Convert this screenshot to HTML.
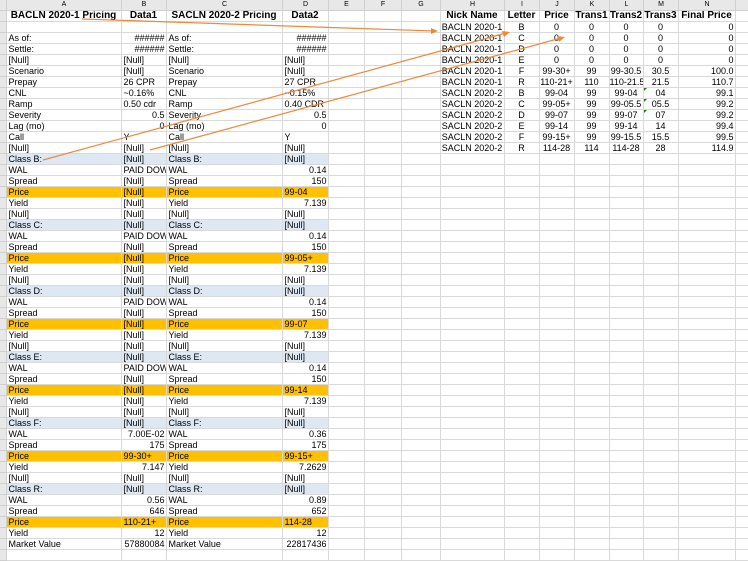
<!DOCTYPE html>
<html><head><meta charset="utf-8"><style>
body{margin:0;width:748px;height:559px;overflow:hidden;background:#fff;font-family:"Liberation Sans",Arial,sans-serif;position:relative}
table{border-collapse:collapse;table-layout:fixed;width:748px;position:absolute;left:0;top:0}
td{height:10px;padding:0 1px 0 2px;border-right:1px solid #d9d9d9;border-bottom:1px solid #d9d9d9;font-size:9px;line-height:10px;white-space:nowrap;overflow:hidden;color:#000}
tr.h td{background:#e8e8e8;font-size:7px;text-align:center;height:10px;border-color:#cfcfcf}
.n{text-align:right}.c{text-align:center;padding:0}
.t td{font-weight:bold;text-align:center;font-size:10px;padding:0}
.b td.x{background:#dde8f3}
.o td.x{background:#ffc000}
td.r{background:#e8e8e8;border-color:#cfcfcf}
.g{position:relative}
.g:before{content:"";position:absolute;left:0;top:0;border-top:3px solid #187a18;border-right:3px solid transparent}
</style></head><body>
<table>
<colgroup><col style="width:6px"><col style="width:115px"><col style="width:45px"><col style="width:116px"><col style="width:46px"><col style="width:36px"><col style="width:37px"><col style="width:39px"><col style="width:64px"><col style="width:35px"><col style="width:35px"><col style="width:35px"><col style="width:34px"><col style="width:35px"><col style="width:57px"><col style="width:13px"></colgroup>
<tr class="h"><td class="r"></td><td>A</td><td>B</td><td>C</td><td>D</td><td>E</td><td>F</td><td>G</td><td>H</td><td>I</td><td>J</td><td>K</td><td>L</td><td>M</td><td>N</td><td></td></tr>
<tr class="t"><td class="r"></td><td>BACLN 2020-1 Pricing</td><td>Data1</td><td>SACLN 2020-2 Pricing</td><td>Data2</td><td></td><td></td><td></td><td>Nick Name</td><td>Letter</td><td>Price</td><td>Trans1</td><td>Trans2</td><td>Trans3</td><td>Final Price</td><td></td></tr>
<tr><td class="r"></td><td></td><td></td><td></td><td></td><td></td><td></td><td></td><td class="c">BACLN 2020-1</td><td class="c">B</td><td class="c">0</td><td class="c">0</td><td class="c">0</td><td class="c">0</td><td class="n">0</td><td></td></tr>
<tr><td class="r"></td><td>As of:</td><td class="n">######</td><td>As of:</td><td class="n">######</td><td></td><td></td><td></td><td class="c">BACLN 2020-1</td><td class="c">C</td><td class="c">0</td><td class="c">0</td><td class="c">0</td><td class="c">0</td><td class="n">0</td><td></td></tr>
<tr><td class="r"></td><td>Settle:</td><td class="n">######</td><td>Settle:</td><td class="n">######</td><td></td><td></td><td></td><td class="c">BACLN 2020-1</td><td class="c">D</td><td class="c">0</td><td class="c">0</td><td class="c">0</td><td class="c">0</td><td class="n">0</td><td></td></tr>
<tr><td class="r"></td><td>[Null]</td><td>[Null]</td><td>[Null]</td><td>[Null]</td><td></td><td></td><td></td><td class="c">BACLN 2020-1</td><td class="c">E</td><td class="c">0</td><td class="c">0</td><td class="c">0</td><td class="c">0</td><td class="n">0</td><td></td></tr>
<tr><td class="r"></td><td>Scenario</td><td>[Null]</td><td>Scenario</td><td>[Null]</td><td></td><td></td><td></td><td class="c">BACLN 2020-1</td><td class="c">F</td><td class="c">99-30+</td><td class="c">99</td><td class="c">99-30.5</td><td class="c">30.5</td><td class="n">100.0</td><td></td></tr>
<tr><td class="r"></td><td>Prepay</td><td>26 CPR</td><td>Prepay</td><td>27 CPR</td><td></td><td></td><td></td><td class="c">BACLN 2020-1</td><td class="c">R</td><td class="c">110-21+</td><td class="c">110</td><td class="c">110-21.5</td><td class="c">21.5</td><td class="n">110.7</td><td></td></tr>
<tr><td class="r"></td><td>CNL</td><td>~0.16%</td><td>CNL</td><td>~0.15%</td><td></td><td></td><td></td><td class="c">SACLN 2020-2</td><td class="c">B</td><td class="c">99-04</td><td class="c">99</td><td class="c">99-04</td><td class="c g">04</td><td class="n">99.1</td><td></td></tr>
<tr><td class="r"></td><td>Ramp</td><td>0.50 cdr</td><td>Ramp</td><td>0.40 CDR</td><td></td><td></td><td></td><td class="c">SACLN 2020-2</td><td class="c">C</td><td class="c">99-05+</td><td class="c">99</td><td class="c">99-05.5</td><td class="c g">05.5</td><td class="n">99.2</td><td></td></tr>
<tr><td class="r"></td><td>Severity</td><td class="n">0.5</td><td>Severity</td><td class="n">0.5</td><td></td><td></td><td></td><td class="c">SACLN 2020-2</td><td class="c">D</td><td class="c">99-07</td><td class="c">99</td><td class="c">99-07</td><td class="c g">07</td><td class="n">99.2</td><td></td></tr>
<tr><td class="r"></td><td>Lag (mo)</td><td class="n">0</td><td>Lag (mo)</td><td class="n">0</td><td></td><td></td><td></td><td class="c">SACLN 2020-2</td><td class="c">E</td><td class="c">99-14</td><td class="c">99</td><td class="c">99-14</td><td class="c">14</td><td class="n">99.4</td><td></td></tr>
<tr><td class="r"></td><td>Call</td><td>Y</td><td>Call</td><td>Y</td><td></td><td></td><td></td><td class="c">SACLN 2020-2</td><td class="c">F</td><td class="c">99-15+</td><td class="c">99</td><td class="c">99-15.5</td><td class="c">15.5</td><td class="n">99.5</td><td></td></tr>
<tr><td class="r"></td><td>[Null]</td><td>[Null]</td><td>[Null]</td><td>[Null]</td><td></td><td></td><td></td><td class="c">SACLN 2020-2</td><td class="c">R</td><td class="c">114-28</td><td class="c">114</td><td class="c">114-28</td><td class="c">28</td><td class="n">114.9</td><td></td></tr>
<tr class="b"><td class="r"></td><td class="x">Class B:</td><td class="x">[Null]</td><td class="x">Class B:</td><td class="x">[Null]</td><td></td><td></td><td></td><td></td><td></td><td></td><td></td><td></td><td></td><td></td><td></td></tr>
<tr><td class="r"></td><td>WAL</td><td>PAID DOWN</td><td>WAL</td><td class="n">0.14</td><td></td><td></td><td></td><td></td><td></td><td></td><td></td><td></td><td></td><td></td><td></td></tr>
<tr><td class="r"></td><td>Spread</td><td>[Null]</td><td>Spread</td><td class="n">150</td><td></td><td></td><td></td><td></td><td></td><td></td><td></td><td></td><td></td><td></td><td></td></tr>
<tr class="o"><td class="r"></td><td class="x">Price</td><td class="x">[Null]</td><td class="x">Price</td><td class="x">99-04</td><td></td><td></td><td></td><td></td><td></td><td></td><td></td><td></td><td></td><td></td><td></td></tr>
<tr><td class="r"></td><td>Yield</td><td>[Null]</td><td>Yield</td><td class="n">7.139</td><td></td><td></td><td></td><td></td><td></td><td></td><td></td><td></td><td></td><td></td><td></td></tr>
<tr><td class="r"></td><td>[Null]</td><td>[Null]</td><td>[Null]</td><td>[Null]</td><td></td><td></td><td></td><td></td><td></td><td></td><td></td><td></td><td></td><td></td><td></td></tr>
<tr class="b"><td class="r"></td><td class="x">Class C:</td><td class="x">[Null]</td><td class="x">Class C:</td><td class="x">[Null]</td><td></td><td></td><td></td><td></td><td></td><td></td><td></td><td></td><td></td><td></td><td></td></tr>
<tr><td class="r"></td><td>WAL</td><td>PAID DOWN</td><td>WAL</td><td class="n">0.14</td><td></td><td></td><td></td><td></td><td></td><td></td><td></td><td></td><td></td><td></td><td></td></tr>
<tr><td class="r"></td><td>Spread</td><td>[Null]</td><td>Spread</td><td class="n">150</td><td></td><td></td><td></td><td></td><td></td><td></td><td></td><td></td><td></td><td></td><td></td></tr>
<tr class="o"><td class="r"></td><td class="x">Price</td><td class="x">[Null]</td><td class="x">Price</td><td class="x">99-05+</td><td></td><td></td><td></td><td></td><td></td><td></td><td></td><td></td><td></td><td></td><td></td></tr>
<tr><td class="r"></td><td>Yield</td><td>[Null]</td><td>Yield</td><td class="n">7.139</td><td></td><td></td><td></td><td></td><td></td><td></td><td></td><td></td><td></td><td></td><td></td></tr>
<tr><td class="r"></td><td>[Null]</td><td>[Null]</td><td>[Null]</td><td>[Null]</td><td></td><td></td><td></td><td></td><td></td><td></td><td></td><td></td><td></td><td></td><td></td></tr>
<tr class="b"><td class="r"></td><td class="x">Class D:</td><td class="x">[Null]</td><td class="x">Class D:</td><td class="x">[Null]</td><td></td><td></td><td></td><td></td><td></td><td></td><td></td><td></td><td></td><td></td><td></td></tr>
<tr><td class="r"></td><td>WAL</td><td>PAID DOWN</td><td>WAL</td><td class="n">0.14</td><td></td><td></td><td></td><td></td><td></td><td></td><td></td><td></td><td></td><td></td><td></td></tr>
<tr><td class="r"></td><td>Spread</td><td>[Null]</td><td>Spread</td><td class="n">150</td><td></td><td></td><td></td><td></td><td></td><td></td><td></td><td></td><td></td><td></td><td></td></tr>
<tr class="o"><td class="r"></td><td class="x">Price</td><td class="x">[Null]</td><td class="x">Price</td><td class="x">99-07</td><td></td><td></td><td></td><td></td><td></td><td></td><td></td><td></td><td></td><td></td><td></td></tr>
<tr><td class="r"></td><td>Yield</td><td>[Null]</td><td>Yield</td><td class="n">7.139</td><td></td><td></td><td></td><td></td><td></td><td></td><td></td><td></td><td></td><td></td><td></td></tr>
<tr><td class="r"></td><td>[Null]</td><td>[Null]</td><td>[Null]</td><td>[Null]</td><td></td><td></td><td></td><td></td><td></td><td></td><td></td><td></td><td></td><td></td><td></td></tr>
<tr class="b"><td class="r"></td><td class="x">Class E:</td><td class="x">[Null]</td><td class="x">Class E:</td><td class="x">[Null]</td><td></td><td></td><td></td><td></td><td></td><td></td><td></td><td></td><td></td><td></td><td></td></tr>
<tr><td class="r"></td><td>WAL</td><td>PAID DOWN</td><td>WAL</td><td class="n">0.14</td><td></td><td></td><td></td><td></td><td></td><td></td><td></td><td></td><td></td><td></td><td></td></tr>
<tr><td class="r"></td><td>Spread</td><td>[Null]</td><td>Spread</td><td class="n">150</td><td></td><td></td><td></td><td></td><td></td><td></td><td></td><td></td><td></td><td></td><td></td></tr>
<tr class="o"><td class="r"></td><td class="x">Price</td><td class="x">[Null]</td><td class="x">Price</td><td class="x">99-14</td><td></td><td></td><td></td><td></td><td></td><td></td><td></td><td></td><td></td><td></td><td></td></tr>
<tr><td class="r"></td><td>Yield</td><td>[Null]</td><td>Yield</td><td class="n">7.139</td><td></td><td></td><td></td><td></td><td></td><td></td><td></td><td></td><td></td><td></td><td></td></tr>
<tr><td class="r"></td><td>[Null]</td><td>[Null]</td><td>[Null]</td><td>[Null]</td><td></td><td></td><td></td><td></td><td></td><td></td><td></td><td></td><td></td><td></td><td></td></tr>
<tr class="b"><td class="r"></td><td class="x">Class F:</td><td class="x">[Null]</td><td class="x">Class F:</td><td class="x">[Null]</td><td></td><td></td><td></td><td></td><td></td><td></td><td></td><td></td><td></td><td></td><td></td></tr>
<tr><td class="r"></td><td>WAL</td><td class="n">7.00E-02</td><td>WAL</td><td class="n">0.36</td><td></td><td></td><td></td><td></td><td></td><td></td><td></td><td></td><td></td><td></td><td></td></tr>
<tr><td class="r"></td><td>Spread</td><td class="n">175</td><td>Spread</td><td class="n">175</td><td></td><td></td><td></td><td></td><td></td><td></td><td></td><td></td><td></td><td></td><td></td></tr>
<tr class="o"><td class="r"></td><td class="x">Price</td><td class="x">99-30+</td><td class="x">Price</td><td class="x">99-15+</td><td></td><td></td><td></td><td></td><td></td><td></td><td></td><td></td><td></td><td></td><td></td></tr>
<tr><td class="r"></td><td>Yield</td><td class="n">7.147</td><td>Yield</td><td class="n">7.2629</td><td></td><td></td><td></td><td></td><td></td><td></td><td></td><td></td><td></td><td></td><td></td></tr>
<tr><td class="r"></td><td>[Null]</td><td>[Null]</td><td>[Null]</td><td>[Null]</td><td></td><td></td><td></td><td></td><td></td><td></td><td></td><td></td><td></td><td></td><td></td></tr>
<tr class="b"><td class="r"></td><td class="x">Class R:</td><td class="x">[Null]</td><td class="x">Class R:</td><td class="x">[Null]</td><td></td><td></td><td></td><td></td><td></td><td></td><td></td><td></td><td></td><td></td><td></td></tr>
<tr><td class="r"></td><td>WAL</td><td class="n">0.56</td><td>WAL</td><td class="n">0.89</td><td></td><td></td><td></td><td></td><td></td><td></td><td></td><td></td><td></td><td></td><td></td></tr>
<tr><td class="r"></td><td>Spread</td><td class="n">646</td><td>Spread</td><td class="n">652</td><td></td><td></td><td></td><td></td><td></td><td></td><td></td><td></td><td></td><td></td><td></td></tr>
<tr class="o"><td class="r"></td><td class="x">Price</td><td class="x">110-21+</td><td class="x">Price</td><td class="x">114-28</td><td></td><td></td><td></td><td></td><td></td><td></td><td></td><td></td><td></td><td></td><td></td></tr>
<tr><td class="r"></td><td>Yield</td><td class="n">12</td><td>Yield</td><td class="n">12</td><td></td><td></td><td></td><td></td><td></td><td></td><td></td><td></td><td></td><td></td><td></td></tr>
<tr><td class="r"></td><td>Market Value</td><td class="n">57880084</td><td>Market Value</td><td class="n">22817436</td><td></td><td></td><td></td><td></td><td></td><td></td><td></td><td></td><td></td><td></td><td></td></tr>
<tr><td class="r"></td><td></td><td></td><td></td><td></td><td></td><td></td><td></td><td></td><td></td><td></td><td></td><td></td><td></td><td></td><td></td></tr>
</table>
<svg width="748" height="559" style="position:absolute;left:0;top:0" xmlns="http://www.w3.org/2000/svg">
<g stroke="#f0883a" stroke-width="1.2" fill="#f0883a">
<line x1="82" y1="19" x2="434" y2="31"/><polygon points="438,31 431,28 431,34" stroke="none"/>
<line x1="43" y1="160" x2="506" y2="33"/><polygon points="510,32 502,31 504,37" stroke="none"/>
<line x1="150" y1="150" x2="561" y2="38"/><polygon points="565,37 557,36 559,42" stroke="none"/>
</g></svg>
</body></html>
